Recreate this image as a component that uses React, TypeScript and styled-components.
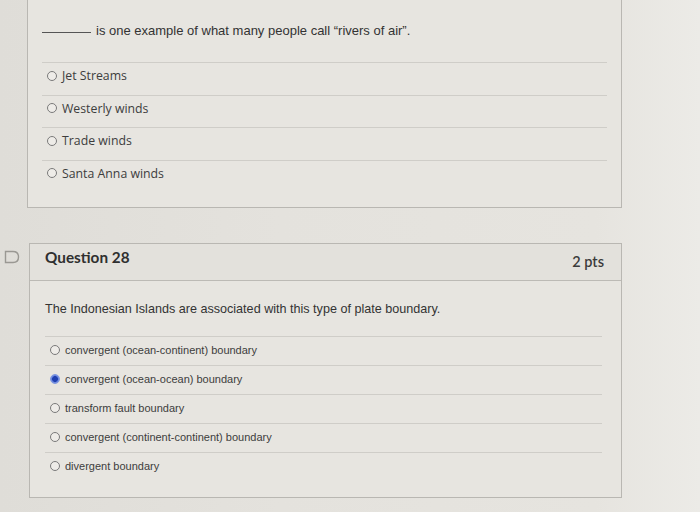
import React from "react";
import styled, { createGlobalStyle } from "styled-components";

const Global = createGlobalStyle`
  html, body { margin: 0; padding: 0; }
  body {
    width: 700px;
    height: 512px;
    overflow: hidden;
    background: linear-gradient(to right, #dfddd8 0%, #e4e2dd 40%, #e6e4df 85%, #ecebe7 100%);
  }
`;

const Page = styled.div`
  display: flex;
  flex-direction: column;
  gap: 35px;
`;

const Row = styled.div`
  display: flex;
  align-items: flex-start;
`;

const Gutter = styled.div`
  width: 29px;
  flex: none;
  display: flex;
  justify-content: flex-start;
  padding: 7px 0 0 4px;
  box-sizing: border-box;
`;

const Card = styled.div<{ $w: number; $top?: boolean }>`
  width: ${(p) => p.$w}px;
  box-sizing: border-box;
  border: 1px solid #b9b7b2;
  ${(p) => (p.$top ? "border-top: none; margin-left: -2px;" : "")}
  background: #e7e5e0;
`;

const Header = styled.div`
  height: 37px;
  box-sizing: border-box;
  display: flex;
  align-items: flex-start;
  justify-content: space-between;
  padding: 0 17px 0 15px;
  background: #e3e1dc;
  border-bottom: 1px solid #bcbab5;
  font-family: Lato, "Liberation Sans", sans-serif;
  color: #2f2f2f;
`;

const Title = styled.div`
  font-size: 15.3px;
  line-height: 18px;
  font-weight: 700;
  margin-top: 4px;
`;

const Pts = styled.div`
  font-size: 14.5px;
  line-height: 18px;
  font-weight: 600;
  color: #3b3b3b;
  margin-top: 9px;
`;

const Body = styled.div<{ $pt: number; $pb: number; $px: number }>`
  padding: ${(p) => p.$pt}px ${(p) => p.$px}px ${(p) => p.$pb}px ${(p) => p.$px}px;
`;

const Prompt = styled.div<{ $mb: number; $size: number }>`
  font-family: "Liberation Sans", Arial, sans-serif;
  font-size: ${(p) => p.$size}px;
  color: #333;
  margin-bottom: ${(p) => p.$mb}px;
  display: flex;
  align-items: baseline;
  line-height: 16px;
`;

const Blank = styled.span`
  display: inline-block;
  width: 49px;
  border-bottom: 1px solid #555;
  margin-right: 5px;
  transform: translateY(-2px);
`;

const Options = styled.div`
  display: flex;
  flex-direction: column;
`;

const Option = styled.div<{
  $h: number;
  $font: string;
  $size: number;
  $pl: number;
  $pb: number;
  $mr?: number;
}>`
  height: ${(p) => p.$h}px;
  border-top: 1px solid #cfcdc8;
  display: flex;
  align-items: center;
  gap: 5px;
  padding-left: ${(p) => p.$pl}px;
  padding-bottom: ${(p) => p.$pb}px;
  margin-right: ${(p) => p.$mr ?? 0}px;
  font-family: ${(p) => p.$font};
  font-size: ${(p) => p.$size}px;
  color: #3d3d3d;
  box-sizing: border-box;
`;

const Radio = styled.span<{ $on?: boolean }>`
  width: 10px;
  height: 10px;
  flex: none;
  border-radius: 50%;
  box-sizing: border-box;
  border: 1.3px solid ${(p) => (p.$on ? "#7d97e0" : "#7a7a7a")};
  background: ${(p) =>
    p.$on ? "radial-gradient(circle, #1f3fb0 0 45%, #5a78d8 55%, #c9d3f2 100%)" : "#eeece8"};
`;

const FlagIcon = () => (
  <svg width="16" height="14" viewBox="0 0 16 14">
    <path
      d="M1.5 1.5 H9 Q14.5 1.5 14.5 7 Q14.5 12.5 9 12.5 H1.5 Z"
      fill="none"
      stroke="#9a9893"
      strokeWidth="1.4"
    />
  </svg>
);

const q1 = ["Jet Streams", "Westerly winds", "Trade winds", "Santa Anna winds"];
const q2 = [
  "convergent (ocean-continent) boundary",
  "convergent (ocean-ocean) boundary",
  "transform fault boundary",
  "convergent (continent-continent) boundary",
  "divergent boundary",
];

export default function App() {
  return (
    <>
      <Global />
      <Page>
        <Row>
          <Gutter />
          <Card $w={595} $top>
            <Body $pt={23} $pb={15} $px={14}>
              <Prompt $mb={23} $size={13}>
                <Blank />
                is one example of what many people call “rivers of air”.
              </Prompt>
              <Options>
                {q1.map((t) => (
                  <Option
                    key={t}
                    $h={32.5}
                    $font={`"Open Sans", "Noto Sans", sans-serif`}
                    $size={12.3}
                    $pl={5}
                    $pb={6}
                  >
                    <Radio />
                    {t}
                  </Option>
                ))}
              </Options>
            </Body>
          </Card>
        </Row>
        <Row>
          <Gutter>
            <FlagIcon />
          </Gutter>
          <Card $w={593}>
            <Header>
              <Title>Question 28</Title>
              <Pts>2 pts</Pts>
            </Header>
            <Body $pt={20} $pb={16} $px={15}>
              <Prompt $mb={19} $size={12.6}>
                The Indonesian Islands are associated with this type of plate boundary.
              </Prompt>
              <Options>
                {q2.map((t, i) => (
                  <Option
                    key={t}
                    $h={29}
                    $font={`"Liberation Sans", Arial, sans-serif`}
                    $size={11}
                    $pl={5}
                    $pb={2}
                    $mr={4}
                  >
                    <Radio $on={i === 1} />
                    {t}
                  </Option>
                ))}
              </Options>
            </Body>
          </Card>
        </Row>
      </Page>
    </>
  );
}
